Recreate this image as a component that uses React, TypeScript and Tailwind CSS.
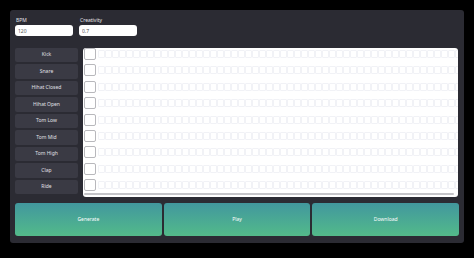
import React from 'react';

const instruments = ['Kick', 'Snare', 'Hihat Closed', 'Hihat Open', 'Tom Low', 'Tom Mid', 'Tom High', 'Clap', 'Ride'];
const steps = Array.from({ length: 52 }, (_, i) => i);

export default function App() {
  return (
    <div className="w-[474px] h-[258px] bg-black pt-[10px] pl-[10px]" style={{ fontFamily: '"Noto Sans", "Liberation Sans", sans-serif' }}>
      <div className="w-[454px] h-[233px] bg-[#2b2b33] rounded-[3px] pt-[7px] px-[5px] flex flex-col">
        {/* settings */}
        <div className="flex gap-[6px]">
          <div className="flex flex-col gap-[2px]">
            <span className="text-[5px] leading-[6px] text-[#e2e2e8] pl-[1px]">BPM</span>
            <input defaultValue="120" className="w-[58px] h-[11px] rounded-[3px] bg-white text-[5px] px-[3px] text-[#555] outline-none" />
          </div>
          <div className="flex flex-col gap-[2px]">
            <span className="text-[5px] leading-[6px] text-[#e2e2e8] pl-[1px]">Creativity</span>
            <input defaultValue="0.7" className="w-[58px] h-[11px] rounded-[3px] bg-white text-[5px] px-[3px] text-[#555] outline-none" />
          </div>
        </div>

        {/* sequencer */}
        <div className="flex gap-[5px] mt-[12px]">
          <div className="flex flex-col gap-[2.1px] w-[63px]">
            {instruments.map((name) => (
              <button key={name} className="h-[14.4px] rounded-[2px] bg-[#3a3a44] text-[5px] text-[#e0e0e6] flex items-center justify-center">
                {name}
              </button>
            ))}
          </div>
          <div className="w-[375px] h-[149px] bg-white rounded-[3px] overflow-hidden flex flex-col relative">
            <div className="flex flex-col gap-[4.4px] pl-[1px]">
              {instruments.map((name) => (
                <div key={name} className="flex items-center h-[12px]">
                  <div className="w-[12px] h-[12px] rounded-[2px] border border-[#b8b8bc] bg-white shrink-0" />
                  <div className="flex ml-[2px]">
                    {steps.map((s) => (
                      <div key={s} className="w-[7px] h-[8px] border border-[#f1f2f6] rounded-[1px] shrink-0" />
                    ))}
                  </div>
                </div>
              ))}
            </div>
            <div className="absolute left-[1px] right-[4px] bottom-[2px] h-[2px] bg-[#c4c4c8] rounded-full" />
          </div>
        </div>

        {/* actions */}
        <div className="flex gap-[2px] mt-[6px]">
          {['Generate', 'Play', 'Download'].map((label) => (
            <button key={label} className="flex-1 h-[33px] rounded-[3px] bg-gradient-to-b from-[#42979d] to-[#53ba89] text-[5px] text-white">
              {label}
            </button>
          ))}
        </div>
      </div>
    </div>
  );
}
